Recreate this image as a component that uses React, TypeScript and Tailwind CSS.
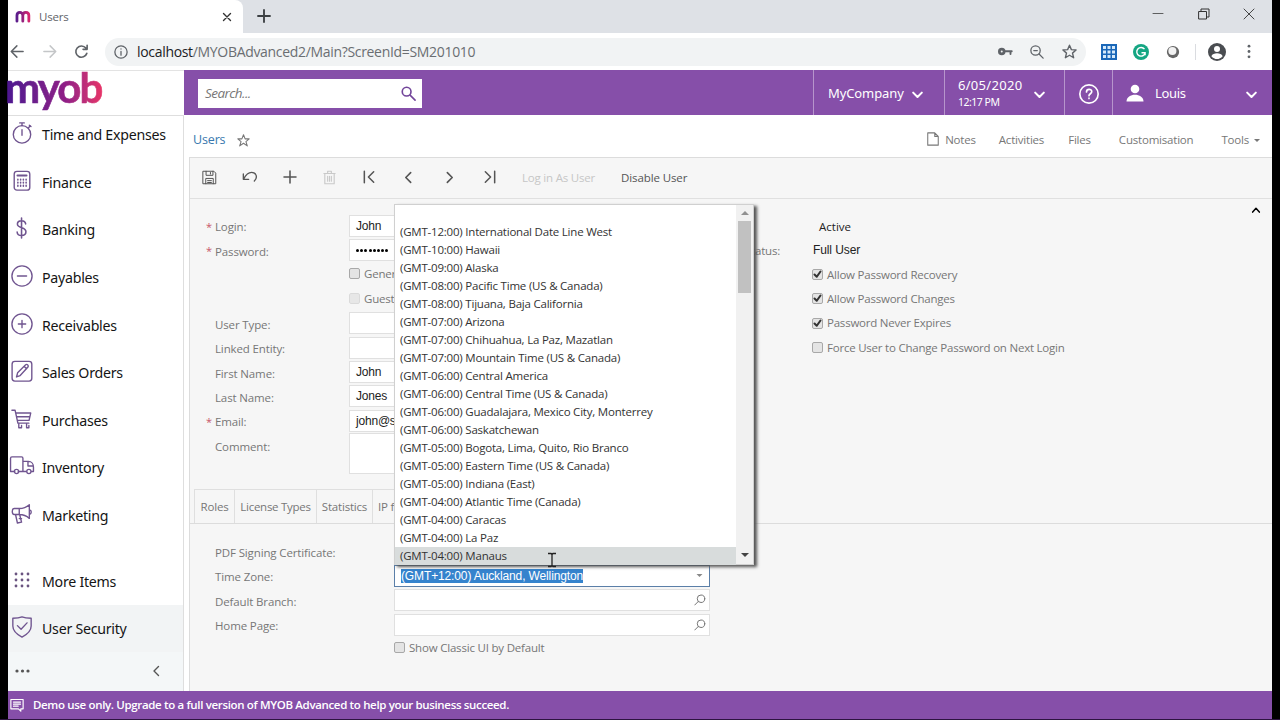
import type { ReactNode } from "react"

const SEGOE = "font-['Open_Sans','Segoe_UI',sans-serif]"

const timeZones = [
    "(GMT-12:00) International Date Line West",
    "(GMT-10:00) Hawaii",
    "(GMT-09:00) Alaska",
    "(GMT-08:00) Pacific Time (US & Canada)",
    "(GMT-08:00) Tijuana, Baja California",
    "(GMT-07:00) Arizona",
    "(GMT-07:00) Chihuahua, La Paz, Mazatlan",
    "(GMT-07:00) Mountain Time (US & Canada)",
    "(GMT-06:00) Central America",
    "(GMT-06:00) Central Time (US & Canada)",
    "(GMT-06:00) Guadalajara, Mexico City, Monterrey",
    "(GMT-06:00) Saskatchewan",
    "(GMT-05:00) Bogota, Lima, Quito, Rio Branco",
    "(GMT-05:00) Eastern Time (US & Canada)",
    "(GMT-05:00) Indiana (East)",
    "(GMT-04:00) Atlantic Time (Canada)",
    "(GMT-04:00) Caracas",
    "(GMT-04:00) La Paz",
    "(GMT-04:00) Manaus",
]

function Icon({ children, className = "", width = 1.5 }: { children: ReactNode; className?: string; width?: number }) {
    return (
        <svg
            viewBox="0 0 24 24"
            fill="none"
            stroke="currentColor"
            strokeWidth={width}
            strokeLinecap="round"
            strokeLinejoin="round"
            className={`shrink-0 ${className}`}
        >
            {children}
        </svg>
    )
}

const navItems: { label: string; icon: ReactNode }[] = [
    {
        label: "Time and Expenses",
        icon: (
            <>
                <circle cx="12" cy="13.5" r="9.5" />
                <path d="M12 4V1M9.5 1h5M12 8.5v6M19 6.5l2-2.5M20 3.5l1.8 1.5" />
            </>
        ),
    },
    {
        label: "Finance",
        icon: (
            <>
                <rect x="3.5" y="1.5" width="17" height="20.5" rx="3" />
                <path d="M7 6h10" strokeWidth="2" />
                <path d="M7.5 10v8.5M10.5 10v8.5M13.5 10v8.5M16.5 10v8.5" strokeDasharray="0.8 2.6" strokeWidth="1.7" />
            </>
        ),
    },
    {
        label: "Banking",
        icon: <path d="M11.5 1v22M16 7.500c-.3-2.300-2-3.500-4.500-3.500S7 5.400 7 7.700c0 2.600 2.200 3.300 4.600 4s4.700 1.700 4.700 4.500-2.200 4-4.800 4c-2.700 0-4.600-1.400-4.800-3.900" strokeWidth="1.7" />,
    },
    {
        label: "Payables",
        icon: (
            <>
                <circle cx="12" cy="12" r="11" />
                <path d="M7 12h10" />
            </>
        ),
    },
    {
        label: "Receivables",
        icon: (
            <>
                <circle cx="12" cy="12" r="11" />
                <path d="M8 12h8M12 8v8" />
            </>
        ),
    },
    {
        label: "Sales Orders",
        icon: (
            <>
                <rect x="1.2" y="1.5" width="21.5" height="21.5" rx="3" />
                <path d="M6 18.500l1.200-4.500L16 5.200c1.600-1.200 3.700.7 2.500 2.500L10 17 6 18.500zM14.500 7l2.500 2.500" />
            </>
        ),
    },
    {
        label: "Purchases",
        icon: (
            <>
                <path d="M1 2.500h3.500l3 14h12M5.300 5.500h16.200l-1.800 8H7M6.500 9.500h14" />
                <path d="M8.500 17v4.500h3V19M17 17v4.500h2.500V19" />
            </>
        ),
    },
    {
        label: "Inventory",
        icon: (
            <>
                <path d="M4 18H-.5V3.500c0-1 .5-1.500 1.500-1.500h10.500c1 0 1.500.5 1.500 1.500V18H8M13 7h6c3.500 0 5.500 3 5.500 6v5h-2M16.500 18H13M18.500 7.500V12h5.500" />
                <circle cx="6" cy="18" r="2.3" />
                <circle cx="19.5" cy="18" r="2.3" />
            </>
        ),
    },
    {
        label: "Marketing",
        icon: (
            <>
                <path d="M3.500 6h5.500c4 0 8-1.500 11-4.200v15C17 14 13 12.500 9 12.500H3.500c-2.800 0-2.800-6.500 0-6.500zM9 6v6.500M20 7.500c2.800.3 2.800 4.500 0 5M5 12.800l2 9 4.500-1-2-8" />
                <path d="M9 17h2.500" />
            </>
        ),
    },
]

function Chevron({ className = "", d = "M4 8.500l8 8 8-8", width = 3.8 }: { className?: string; d?: string; width?: number }) {
    return (
        <Icon className={className} width={width}>
            <path d={d} />
        </Icon>
    )
}

function Caret({ className = "" }: { className?: string }) {
    return (
        <svg viewBox="0 0 8 4" className={`h-1 w-2 shrink-0 fill-current ${className}`}>
            <path d="M0 0h8L4 4z" />
        </svg>
    )
}

function Checkbox({ checked = false, faded = false }: { checked?: boolean; faded?: boolean }) {
    return (
        <span className={`flex size-[11px] shrink-0 items-center justify-center rounded-[2px] border bg-[#e4e4e4] ${faded ? "border-[#d4d4d4] opacity-80" : "border-[#a8a8a8]"}`}>
            {checked && (
                <Icon className="size-[9px] text-[#333]" width={5.5}>
                    <path d="M4 12l6 6L20 4" />
                </Icon>
            )}
        </span>
    )
}

function Magnifier({ className = "" }: { className?: string }) {
    return (
        <Icon className={className} width={2}>
            <circle cx="14" cy="9.5" r="7.5" />
            <path d="M8.500 15L1.500 22" />
        </Icon>
    )
}

function Label({ children, required = false }: { children: ReactNode; required?: boolean }) {
    return (
        <span className="flex w-[143px] shrink-0 items-center text-[11.5px] tracking-[-0.13px] text-[#777]">
            <span className="w-[9px] text-[11px] text-[#c8566a]">{required && "*"}</span>
            {children}
        </span>
    )
}

function Row({ label, required, children }: { label?: string; required?: boolean; children?: ReactNode }) {
    return (
        <div className="flex h-[24.4px] items-center">
            <Label required={required}>{label}</Label>
            {children}
        </div>
    )
}

function Field({ value = "" }: { value?: string }) {
    return (
        <span className="-mt-[2.5px] flex h-[22px] w-[300px] items-center border border-[#e0e0e0] bg-white pl-[6px] font-['Liberation_Sans',Arial,sans-serif] text-[12px] text-[#222]">
            {value}
        </span>
    )
}

function BrowserChrome() {
    return (
        <div className={SEGOE}>
            <div className="flex h-[33px] bg-[#dee1e6]">
                <div className="flex w-[235px] items-center rounded-tr-lg bg-white pr-[10px] pl-[6px]">
                    <svg viewBox="0 0 18 14" className="h-[13px] w-[18px]" fill="none" strokeWidth="3" strokeLinecap="round">
                        <defs>
                            <linearGradient id="fav" x1="0" x2="1">
                                <stop offset="0" stopColor="#5a1d8c" />
                                <stop offset="1" stopColor="#d6246e" />
                            </linearGradient>
                        </defs>
                        <path stroke="url(#fav)" d="M2.500 12V6c0-4.500 6.300-4.500 6.300 0v6M8.800 6c0-4.500 6.500-4.500 6.500 0v6" />
                    </svg>
                    <span className="ml-[7px] text-[11.5px] tracking-[-0.2px] text-[#5f6368]">Users</span>
                    <Icon className="ml-auto size-[12px] text-[#333]" width={2.8}>
                        <path d="M5 5l14 14M19 5L5 19" />
                    </Icon>
                </div>
                <Icon className="mt-[8px] ml-[13px] size-[16px] text-[#3c4043]" width={2.8}>
                    <path d="M12 3v18M3 12h18" />
                </Icon>
                <div className="mt-[6px] mr-[17px] ml-auto flex h-4 items-center gap-[33.5px] text-[#333]">
                    <Icon className="size-[12px]">
                        <path d="M2 11h20" />
                    </Icon>
                    <Icon className="size-[12px]" width={2}>
                        <path d="M2 7h15v15H2zM6 7V2h16v16h-5" />
                    </Icon>
                    <Icon className="size-[12px]" width={1.8}>
                        <path d="M2 2l20 20M22 2L2 22" />
                    </Icon>
                </div>
            </div>
            <div className="flex h-[37px] items-center bg-white pl-[2px] text-[#5f6368]">
                <Icon className="size-[15px]" width={2.3}>
                    <path d="M21 12H2M11 3l-9 9 9 9" />
                </Icon>
                <Icon className="ml-[17px] size-[15px] text-[#c4c6c8]" width={2.3}>
                    <path d="M3 12h19M13 3l9 9-9 9" />
                </Icon>
                <Icon className="ml-[17px] size-[15px]" width={2.6}>
                    <path d="M19 6.500A9 9 0 1 0 20.500 15M21 2v6.500h-6.500" />
                </Icon>
                <div className="ml-[16px] flex h-[28px] w-[981px] items-center rounded-full bg-[#f1f3f4] pr-[9px] pl-[9px]">
                    <Icon className="size-[14px]" width={2.2}>
                        <circle cx="12" cy="12" r="10.5" />
                        <path d="M12 11v6.500M12 6.500v.5" />
                    </Icon>
                    <span className="ml-[9px] text-[14px] tracking-[-0.32px] text-[#6a6e72]">
                        <span className="text-[#202124]">localhost</span>/MYOBAdvanced2/Main?ScreenId=SM201010
                    </span>
                    <Icon className="ml-auto size-[15px]" width={3}>
                        <circle cx="6" cy="12" r="3.8" strokeWidth="4.4" />
                        <path d="M11 11.500h11M20 12v4" />
                    </Icon>
                    <Icon className="ml-[17px] size-[14px]" width={2.2}>
                        <circle cx="9.5" cy="9.5" r="8" />
                        <path d="M15.500 15.500L22.500 22.500M6.500 9.500h6" />
                    </Icon>
                    <Icon className="ml-[18px] size-[15px]" width={2.2}>
                        <path d="M12 2l3 7 7.500.6-5.700 5 1.800 7.400L12 18l-6.600 4 1.800-7.400-5.700-5L9 9z" />
                    </Icon>
                </div>
                <svg viewBox="0 0 16 16" className="ml-[15px] size-[16px]">
                    <path fill="#1a67b8" d="M0 0h16v16H0z" />
                    <path fill="#d6eafa" d="M2 2h3v3H2zM6.500 2h3v3h-3zM11 2h3v3h-3zM2 6.500h3v3H2zM6.500 6.500h3v3h-3zM11 6.500h3v3h-3zM2 11h3v3H2zM6.500 11h3v3h-3zM11 11h3v3h-3z" />
                </svg>
                <svg viewBox="0 0 16 16" className="ml-[16px] size-[16px]" fill="none" stroke="#fff" strokeWidth="1.4">
                    <circle cx="8" cy="8" r="8" fill="#15a683" stroke="none" />
                    <path d="M11.500 5.200A4.300 4.300 0 1 0 12.200 9M8.500 8.700h3.600v2.500" />
                </svg>
                <svg viewBox="0 0 16 16" className="ml-[17px] size-[14px]">
                    <circle cx="8" cy="8" r="7" fill="#666" />
                    <circle cx="7.3" cy="6.8" r="4.6" fill="#f2f2f2" />
                </svg>
                <span className="ml-[15px] h-[16px] w-px bg-[#dadce0]" />
                <svg viewBox="0 0 24 24" className="ml-[12px] size-[18px] overflow-visible">
                    <circle cx="12" cy="12" r="12" fill="#4a4d51" />
                    <circle cx="12" cy="8" r="4" fill="#fff" />
                    <path d="M4.500 17.500c2-5 13-5 15 0-4 5-11 5-15 0z" fill="#fff" />
                </svg>
                <svg viewBox="0 0 4 16" className="ml-[21px] h-[15px] w-[4px] fill-[#5f6368]">
                    <circle cx="2" cy="2.3" r="1.5" />
                    <circle cx="2" cy="8" r="1.5" />
                    <circle cx="2" cy="13.7" r="1.5" />
                </svg>
            </div>
        </div>
    )
}

function Header() {
    return (
        <header className="flex h-[45px] bg-[#864fa9] font-['Noto_Sans',sans-serif] text-white">
            <div className="flex w-[176px] items-center border-t border-[#e3e3e3] bg-white">
                <span className="-mt-[6px] -ml-[3px] bg-linear-to-r from-[#4b1590] via-[#8f1d86] via-60% to-[#ee3464] bg-clip-text pr-1 pb-1.5 font-['Lato',sans-serif] text-[42px] leading-[44px] font-bold tracking-[-1.9px] text-transparent [-webkit-text-stroke:0.6px_transparent]">
                    myob
                </span>
            </div>
            <div className="flex flex-1 items-center pl-[14px]">
                <div className="mt-[2px] flex h-[29px] w-[224px] items-center bg-white pr-[6px] pl-[7px]">
                    <span className={`${SEGOE} text-[13.5px] tracking-[-0.55px] text-[#777] italic`}>Search...</span>
                    <Icon className="-mt-px ml-auto size-[15px] text-[#72459a]" width={2.6}>
                        <circle cx="9" cy="9" r="7" />
                        <path d="M14.500 14.500L22.500 22.500" />
                    </Icon>
                </div>
            </div>
            <div className="flex w-[131px] items-center border-l border-[#b795cc] pt-[3px] pl-[14px] text-[13px]">
                <span className="w-[83px] tracking-[-0.1px]">MyCompany</span>
                <Chevron className="size-[13px]" />
            </div>
            <div className="flex w-[120px] items-center border-l border-[#b795cc] pl-[13px]">
                <div className="w-[75px] pt-px">
                    <div className="text-[13px] leading-[17px] tracking-[0.3px]">6/05/2020</div>
                    <div className="text-[10.5px] leading-[16px] tracking-[-0.5px]">12:17 PM</div>
                </div>
                <Chevron className="mt-[4px] size-[13px]" />
            </div>
            <div className="flex w-[48px] items-center justify-center border-l border-[#b795cc]">
                <Icon className="mt-[3px] size-[20px]" width={2}>
                    <circle cx="12" cy="12" r="11" />
                    <path d="M9 9.500c0-4 6.300-4 6.300-.2 0 2.300-3.300 2.400-3.300 4.700M12 17v.5" />
                </Icon>
            </div>
            <div className="flex w-[160px] items-center border-l border-[#b795cc] pr-[14px] pl-[13px]">
                <svg viewBox="0 0 18 18" className="size-[18px] fill-white">
                    <circle cx="9" cy="5" r="4.3" />
                    <path d="M.5 17.500c0-9 17-9 17 0z" />
                </svg>
                <span className="mt-[2px] ml-[11px] text-[13px] tracking-[-0.3px]">Louis</span>
                <Chevron className="mt-[3px] ml-auto size-[13px]" />
            </div>
        </header>
    )
}

function Sidebar() {
    return (
        <nav className="flex w-[176px] shrink-0 flex-col border-t border-r border-[#dedede] bg-white font-['Noto_Sans',sans-serif] text-[14.2px] tracking-[-0.26px] text-[#151515]">
            <div className="-mt-[5px]">
                {navItems.map((item) => (
                    <div key={item.label} className="flex h-[47.6px] items-center pl-[3px]">
                        <Icon className="-mt-[3px] size-[22px] overflow-visible text-[#705590]" width={1.5}>
                            {item.icon}
                        </Icon>
                        <span className="ml-[9px]">{item.label}</span>
                    </div>
                ))}
            </div>
            <div className="mt-auto flex h-[47px] items-center pl-[6px]">
                <svg viewBox="0 0 16 16" className="-mt-[4px] size-[16px] fill-[#6a5480]">
                    {[2, 8, 14].map((y) => [2, 8, 14].map((x) => <circle key={`${x}-${y}`} cx={x} cy={y} r="1.4" />))}
                </svg>
                <span className="ml-[12px]">More Items</span>
            </div>
            <div className="flex h-[47px] items-center bg-[#f2f4f5] pl-[3px]">
                <Icon className="-mt-[4px] size-[22px] text-[#705590]">
                    <path d="M12 1C8.500 2.500 5 2.500 2 2.500V11c0 6.500 5 9.500 10 12 5-2.500 10-5.500 10-12V2.500c-3 0-6.500 0-10-1.500zM7 10.500l4 4 6.500-7" />
                </Icon>
                <span className="ml-[9px]">User Security</span>
            </div>
            <div className="flex h-[39px] items-center bg-[#f4f7f8] pr-[20px] pl-[7px] text-[#555]">
                <svg viewBox="0 0 15 4" className="-mt-px h-[4px] w-[15px] fill-current">
                    <circle cx="2" cy="2" r="1.6" />
                    <circle cx="7.5" cy="2" r="1.6" />
                    <circle cx="13" cy="2" r="1.6" />
                </svg>
                <Chevron className="-mt-px ml-auto size-[12px]" d="M15 3l-9 9 9 9" width={2.8} />
            </div>
        </nav>
    )
}

function Toolbar() {
    return (
        <div className="flex h-[41px] items-center border-b border-[#e0e0e0] pb-[2px] pl-[12px] text-[11.5px] text-[#555]">
            <Icon className="size-[15px]" width={1.6}>
                <path d="M2 2h17l3 3v17H2zM6.500 2v6.500h11V2M6 22v-8.500h12V22M13.500 4v2.500M9 17h6M9 20h6" />
            </Icon>
            <Icon className="ml-[25px] size-[16px]" width={2}>
                <path d="M2 7.500v8h8M2.500 15C6 8 10 5 14.500 5c7 0 9.500 8 4 13" />
            </Icon>
            <Icon className="ml-[24px] size-[16px]" width={2.3}>
                <path d="M12 3v18M3 12h18" />
            </Icon>
            <Icon className="ml-[24px] size-[15px] text-[#c9c9c9]" width={1.8}>
                <path d="M3 5.500h18M9 5V2h6v3M4.500 6v16h15V6M9 10v8M12 10v8M15 10v8" />
            </Icon>
            <Icon className="ml-[25px] size-[14px]" width={2.6}>
                <path d="M4 2v20M20 3l-9 9 9 9" />
            </Icon>
            <Icon className="ml-[26px] size-[13px]" width={3}>
                <path d="M16 3l-9 9 9 9" />
            </Icon>
            <Icon className="ml-[28px] size-[13px]" width={3}>
                <path d="M8 3l9 9-9 9" />
            </Icon>
            <Icon className="ml-[27px] size-[14px]" width={2.6}>
                <path d="M20 2v20M4 3l9 9-9 9" />
            </Icon>
            <span className="ml-[25px] w-[99px] pt-[2px] text-[#c6c6c6]">Log in As User</span>
            <span className="pt-[2px] tracking-[-0.1px]">Disable User</span>
        </div>
    )
}

function TimeZoneList() {
    return (
        <div className="absolute top-[89px] left-[210px] z-10 flex h-[361px] w-[360px] border border-[#d0d0d0] bg-white shadow-[3px_2px_3px_#555]">
            <ul className="flex-1 pt-[18px] text-[11.5px] tracking-[-0.21px] text-[#333]">
                {timeZones.map((zone, i) => (
                    <li
                        key={zone}
                        className={`h-[18px] pl-[5px] leading-[18px] whitespace-nowrap ${i === timeZones.length - 1 ? "bg-[#d8dcdc]" : ""}`}
                    >
                        {zone}
                    </li>
                ))}
            </ul>
            <div className="flex w-[17px] flex-col items-center bg-[#f1f1f1] pt-[6px] pb-[7px]">
                <Caret className="rotate-180 text-[#909090]" />
                <span className="mt-[6px] h-[72px] w-[13px] bg-[#c1c1c1]" />
                <Caret className="mt-auto text-[#444]" />
            </div>
            {/* text cursor */}
            <svg viewBox="0 0 10 16" className="absolute top-[347px] left-[152px] h-[16px] w-[10px]" fill="none" stroke="#222" strokeWidth="1.3">
                <path d="M1 1.500h3l1 1 1-1h3M5 2v12M1 14.500h3l1-1 1 1h3" />
            </svg>
        </div>
    )
}

function Main() {
    return (
        <main className={`${SEGOE} relative flex flex-1 flex-col bg-white pl-[5px] text-[11.5px] tracking-[-0.2px]`}>
            <div className="flex h-[42px] items-center pt-[8px] pr-[12px] pl-[4px] text-[#777]">
                <span className="text-[12.5px] tracking-[-0.15px] text-[#3878ae]">Users</span>
                <Icon className="mt-px ml-[12px] size-[13px]" width={2}>
                    <path d="M12 1.500l3 7.500h7.500l-6 5 2.500 8-7-5-7 5 2.500-8-6-5H9z" />
                </Icon>
                <div className="ml-auto flex items-center">
                    <Icon className="-mt-[2px] mr-[5px] size-[14px]" width={1.8}>
                        <path d="M3 1.500h12l6 6V22.500H3zM15 1.500v6h6" />
                    </Icon>
                    <span>Notes</span>
                    <span className="ml-[23px]">Activities</span>
                    <span className="ml-[24px]">Files</span>
                    <span className="ml-[28px]">Customisation</span>
                    <span className="ml-[28px]">Tools</span>
                    <Caret className="ml-[5px] h-[3px] w-[6px]" />
                </div>
            </div>
            <div className="flex flex-1 flex-col border-t border-l border-[#dcdcdc] bg-[#f6f6f6]">
                <Toolbar />
                <section className="flex h-[290px] pt-[15.8px] pl-[16px]">
                    <div className="w-[443px]">
                        <Row label="Login:" required>
                            <Field value="John" />
                        </Row>
                        <Row label="Password:" required>
                            <span className="-mt-[2.5px] flex h-[22px] w-[300px] items-center gap-[1.2px] border border-[#e0e0e0] bg-white pl-[6px]">
                                {Array.from({ length: 8 }, (_, i) => (
                                    <span key={i} className="size-[3px] rounded-full bg-black" />
                                ))}
                            </span>
                        </Row>
                        <Row>
                            <span className="-mt-[4px] flex items-center gap-[4px] text-[#777]">
                                <Checkbox /> Generate Password
                            </span>
                        </Row>
                        <Row>
                            <span className="-mt-[4px] flex items-center gap-[4px] text-[#777]">
                                <Checkbox faded /> Guest Account
                            </span>
                        </Row>
                        <Row label="User Type:">
                            <Field />
                        </Row>
                        <Row label="Linked Entity:">
                            <Field />
                        </Row>
                        <Row label="First Name:">
                            <Field value="John" />
                        </Row>
                        <Row label="Last Name:">
                            <Field value="Jones" />
                        </Row>
                        <Row label="Email:" required>
                            <Field value="john@stuff.com" />
                        </Row>
                        <div className="flex">
                            <div className="flex h-[24.4px] items-center">
                                <Label>Comment:</Label>
                            </div>
                            <span className="-mt-px h-[41px] w-[300px] border border-[#e0e0e0] bg-white" />
                        </div>
                    </div>
                    <div className="ml-[96px] flex text-[#777]">
                        <span className="mt-[24.4px] h-[24.4px] w-[67px] leading-[24.4px]">Status:</span>
                        <div className="tracking-[-0.22px]">
                            <div className="flex h-[24.4px] items-center pl-[7px] tracking-[0px] text-[#222]">Active</div>
                            <div className="-mt-[1.5px] flex h-[24.4px] items-center pl-px font-['Liberation_Sans',Arial,sans-serif] text-[12px] tracking-[-0.1px] text-[#222]">
                                Full User
                            </div>
                            {["Allow Password Recovery", "Allow Password Changes", "Password Never Expires", "Force User to Change Password on Next Login"].map((text, i) => (
                                <div key={text} className="flex h-[24.4px] items-center gap-[4px] whitespace-nowrap">
                                    <Checkbox checked={i < 3} /> {text}
                                </div>
                            ))}
                        </div>
                    </div>
                    <Chevron className="-mt-[10px] mr-[11px] ml-auto size-[10px] text-black" d="M4 17l8-9 8 9" width={3.6} />
                </section>
                <div className="flex h-[35px] border-b border-[#dcdcdc] pl-[4px] text-[#777]">
                    <span className="flex w-[41px] items-center justify-center border-x border-t border-[#dfdfdf]">Roles</span>
                    <span className="flex w-[82px] items-center justify-center border-t border-r border-[#dfdfdf] tracking-[-0.28px]">License Types</span>
                    <span className="flex w-[56px] items-center justify-center border-t border-r border-[#dfdfdf]">Statistics</span>
                    <span className="flex w-[90px] items-center border-t border-r border-[#dfdfdf] pl-[5px]">IP filter</span>
                </div>
                <section className="pt-[16.3px] pl-[16px]">
                    <Row label="PDF Signing Certificate:" />
                    <Row label="Time Zone:">
                        <span className="-mt-[2px] ml-[45px] flex h-[22px] w-[316px] items-center border border-[#5b7fa8] bg-white pr-[6px] pl-[6px] font-['Liberation_Sans',Arial,sans-serif] text-[12px] tracking-[-0.13px]">
                            <span className="bg-[#3583cd] leading-[14px] text-white">(GMT+12:00) Auckland, Wellington</span>
                            <Caret className="ml-auto h-[3px] w-[7px] text-[#888]" />
                        </span>
                    </Row>
                    {["Default Branch:", "Home Page:"].map((label) => (
                        <Row key={label} label={label}>
                            <span className="-mt-[2px] ml-[45px] flex h-[22px] w-[316px] items-center justify-end border border-[#e0e0e0] bg-white pr-[3px]">
                                <Magnifier className="size-[12px] text-[#777]" />
                            </span>
                        </Row>
                    ))}
                    <div className="mt-[-2px] ml-[188px] flex h-[24px] items-center gap-[4px] text-[#777]">
                        <Checkbox /> Show Classic UI by Default
                    </div>
                </section>
            </div>
            <TimeZoneList />
        </main>
    )
}

export default function App() {
    return (
        <div className="h-[720px] w-[1280px] overflow-hidden bg-black px-[8px]">
            <BrowserChrome />
            <Header />
            <div className="flex h-[576px]">
                <Sidebar />
                <Main />
            </div>
            <footer className="flex h-[28px] items-center bg-[#864fa9] pl-[2px] text-white">
                <Icon className="size-[14px]" width={2}>
                    <path d="M1.500 2.500h21v16h-4v4l-4-4h-13zM6 7h12M6 10.500h12M6 14h8" />
                </Icon>
                <span className="ml-[9px] font-['Open_Sans',sans-serif] text-[11.5px] font-semibold tracking-[-0.34px]">
                    Demo use only. Upgrade to a full version of MYOB Advanced to help your business succeed.
                </span>
            </footer>
            <div className="-mx-[8px] h-px bg-[#2d1440]" />
        </div>
    )
}
